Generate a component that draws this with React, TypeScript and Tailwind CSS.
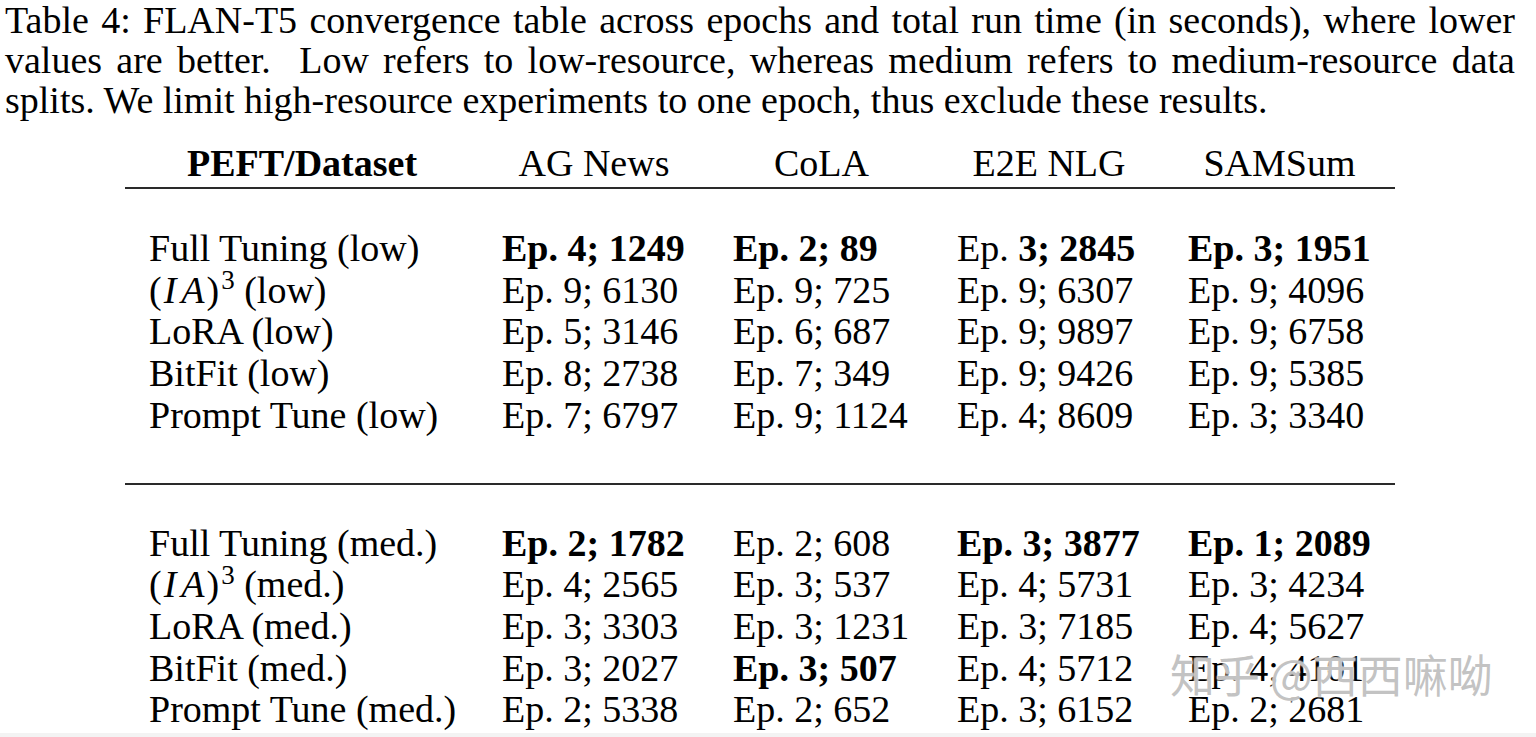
import React from "react";

type Cell = { pre?: string; bold?: string; text?: string };

interface Row {
  label: React.ReactNode;
  cells: Cell[];
}

const IA = () => (
  <span>
    (<i className="mr-[5px] ml-[2px]">I</i>
    <i className="mr-[2px]">A</i>)<sup className="ml-[2px] text-[27px]">3</sup>
  </span>
);

const b = (s: string): Cell => ({ bold: s });
const r = (s: string): Cell => ({ text: s });

const lowRows: Row[] = [
  {
    label: "Full Tuning (low)",
    cells: [b("Ep. 4; 1249"), b("Ep. 2; 89"), { pre: "Ep. ", bold: "3; 2845" }, b("Ep. 3; 1951")],
  },
  {
    label: (
      <>
        <IA /> (low)
      </>
    ),
    cells: [r("Ep. 9; 6130"), r("Ep. 9; 725"), r("Ep. 9; 6307"), r("Ep. 9; 4096")],
  },
  { label: "LoRA (low)", cells: [r("Ep. 5; 3146"), r("Ep. 6; 687"), r("Ep. 9; 9897"), r("Ep. 9; 6758")] },
  { label: "BitFit (low)", cells: [r("Ep. 8; 2738"), r("Ep. 7; 349"), r("Ep. 9; 9426"), r("Ep. 9; 5385")] },
  { label: "Prompt Tune (low)", cells: [r("Ep. 7; 6797"), r("Ep. 9; 1124"), r("Ep. 4; 8609"), r("Ep. 3; 3340")] },
];

const medRows: Row[] = [
  {
    label: "Full Tuning (med.)",
    cells: [b("Ep. 2; 1782"), r("Ep. 2; 608"), b("Ep. 3; 3877"), b("Ep. 1; 2089")],
  },
  {
    label: (
      <>
        <IA /> (med.)
      </>
    ),
    cells: [r("Ep. 4; 2565"), r("Ep. 3; 537"), r("Ep. 4; 5731"), r("Ep. 3; 4234")],
  },
  { label: "LoRA (med.)", cells: [r("Ep. 3; 3303"), r("Ep. 3; 1231"), r("Ep. 3; 7185"), r("Ep. 4; 5627")] },
  { label: "BitFit (med.)", cells: [r("Ep. 3; 2027"), b("Ep. 3; 507"), r("Ep. 4; 5712"), r("Ep. 4; 4101")] },
  { label: "Prompt Tune (med.)", cells: [r("Ep. 2; 5338"), r("Ep. 2; 652"), r("Ep. 3; 6152"), r("Ep. 2; 2681")] },
];

const gridCols = "grid grid-cols-[306px_184px_177px_184px_183px] gap-x-[47px]";

const CellText = ({ c }: { c: Cell }) => (
  <div className="whitespace-nowrap">
    {c.pre}
    {c.bold && <b className="font-bold">{c.bold}</b>}
    {c.text}
  </div>
);

const Block = ({ rows }: { rows: Row[] }) => (
  <div className="px-[24px]">
    {rows.map((row, i) => (
      <div key={i} className={`${gridCols} leading-[41.7px]`}>
        <div className="whitespace-nowrap">{row.label}</div>
        {row.cells.map((c, j) => (
          <CellText key={j} c={c} />
        ))}
      </div>
    ))}
  </div>
);

export default function App() {
  return (
    <div className="relative h-[737px] w-[1536px] overflow-hidden bg-white font-['Liberation_Serif',serif] text-[38px] text-black">
      {/* Caption */}
      <div className="w-[1515px] pl-[5px] leading-[40px]">
        <div className="[text-align-last:justify] text-justify">
          Table 4: FLAN-T5 convergence table across epochs and total run time (in seconds), where lower
        </div>
        <div className="[text-align-last:justify] text-justify">
          values are better.&nbsp; Low refers to low-resource, whereas medium refers to medium-resource data
        </div>
        <div>splits. We limit high-resource experiments to one epoch, thus exclude these results.</div>
      </div>

      {/* Table */}
      <div className="ml-[125px] mt-[22px] w-[1270px]">
        <div className={`${gridCols} px-[24px] leading-[42px]`}>
          <div className="text-center font-bold">PEFT/Dataset</div>
          <div className="text-center">AG News</div>
          <div className="text-center">CoLA</div>
          <div className="text-center">E2E NLG</div>
          <div className="text-center">SAMSum</div>
        </div>
        <div className="mt-[3px] h-[2px] bg-[#2a2a2a]" />

        <div className="mt-[39px]">
          <Block rows={lowRows} />
        </div>

        <div className="mt-[46px] h-[2px] bg-[#2a2a2a]" />

        <div className="mt-[38px]">
          <Block rows={medRows} />
        </div>
      </div>

      {/* watermark */}
      <div className="absolute left-[1170px] top-[644px] whitespace-nowrap font-['Noto_Sans_CJK_SC',sans-serif] text-[45px] leading-[60px] text-[#a8a8a8]/70 [text-shadow:0_0_2px_#fff,0_0_2px_#fff]">
        知乎 @西西嘛呦
      </div>

      <div className="absolute bottom-0 left-0 h-[4px] w-full bg-[#f3f3f3]" />
    </div>
  );
}
